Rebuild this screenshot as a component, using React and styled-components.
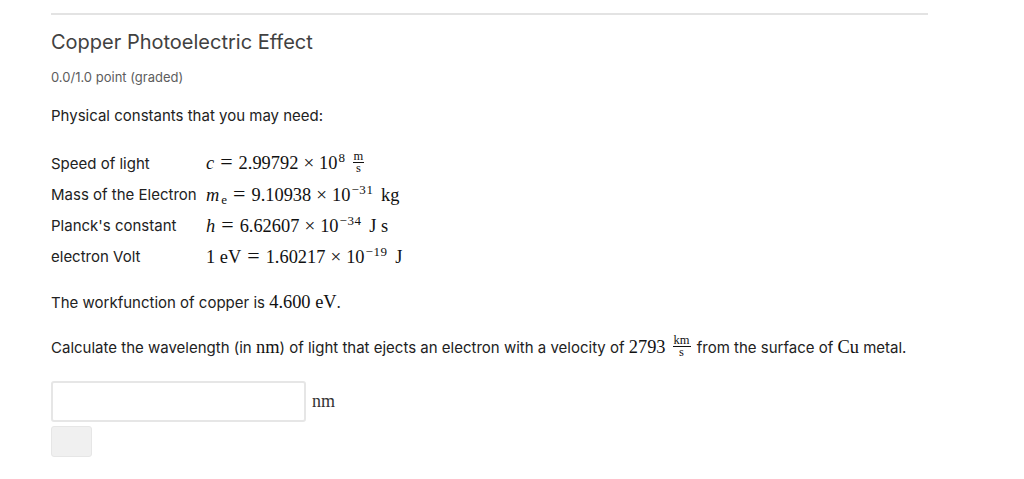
import React from "react";
import styled, { createGlobalStyle } from "styled-components";

const GlobalStyle = createGlobalStyle`
  html, body {
    margin: 0;
    padding: 0;
    background: #fff;
  }
  body {
    font-family: Inter, "Open Sans", sans-serif;
    color: #313131;
  }
`;

const Page = styled.div`
  padding: 0 96px 0 51px;
`;

const Rule = styled.hr`
  margin: 13px 0 0;
  border: 0;
  border-top: 2px solid #e3e3e3;
`;

const Title = styled.h3`
  margin: 15px 0 0;
  font-size: 20px;
  font-weight: 400;
  line-height: 24px;
  color: #414141;
`;

const Points = styled.div`
  margin-top: 15px;
  font-size: 13px;
  line-height: 16px;
  color: #5d5d5d;
`;

const Para = styled.p`
  margin: ${(p) => p.$top}px 0 0;
  font-size: 15px;
  line-height: 20px;
  color: #222;
`;

const Table = styled.div`
  margin-top: 22px;
  display: grid;
  grid-template-columns: 155px auto;
  grid-auto-rows: 31px;
  align-items: center;
  justify-content: start;
`;

const Label = styled.div`
  font-size: 15px;
  color: #222;
`;

const Math = styled.span`
  font-family: "Liberation Serif", "DejaVu Serif", serif;
  font-size: 18.4px;
  color: #111;
  white-space: nowrap;
`;

const Op = styled.span`
  display: inline-block;
  margin: 0 ${(p) => (p.$rel ? 6 : 5)}px;
  font-size: ${(p) => (p.$rel ? 22 : 19)}px;
  line-height: 1;
`;

const Frac = styled.span`
  display: inline-flex;
  flex-direction: column;
  align-items: center;
  vertical-align: middle;
  font-size: 12.5px;
  line-height: 11px;
  margin: 0 2px 0 7px;
  position: relative;
  top: -2px;

  & > span:first-child {
    border-bottom: 1px solid #111;
    padding: 0 1px;
  }
`;

const Sup = styled.sup`
  font-size: 13px;
  line-height: 0;
  margin: 0 ${(p) => (p.$unit ? 3 : 0)}px 0 1px;
  letter-spacing: 0.6px;
`;

const Sub = styled.sub`
  font-size: 13px;
  line-height: 0;
  vertical-align: -3px;
  margin-left: 2px;
`;

const AnswerRow = styled.div`
  margin-top: 21px;
  display: flex;
  align-items: center;
  gap: 6px;
`;

const Input = styled.input`
  width: 255px;
  height: 41px;
  box-sizing: border-box;
  border: 2px solid #e6e6e6;
  border-radius: 3px;
  background: #fff;
`;

const Unit = styled(Math)`
  font-size: 18px;
  color: #333;
`;

const SubmitButton = styled.button`
  display: block;
  margin-top: 4px;
  width: 41px;
  height: 31px;
  border: 1px solid #e6e6e6;
  border-radius: 3px;
  background: #f0f0f0;
`;

const Eq = () => <Op $rel>=</Op>;
const Times = () => <Op>×</Op>;

const constants = [
  [
    "Speed of light",
    <>
      <i>c</i>
      <Eq />
      2.99792
      <Times />
      10<Sup>8</Sup>
      <Frac>
        <span>m</span>
        <span>s</span>
      </Frac>
    </>,
  ],
  [
    "Mass of the Electron",
    <>
      <i>m</i>
      <Sub>e</Sub>
      <Eq />
      9.10938
      <Times />
      10<Sup $unit>−31</Sup> kg
    </>,
  ],
  [
    "Planck's constant",
    <>
      <i>h</i>
      <Eq />
      6.62607
      <Times />
      10<Sup $unit>−34</Sup> J s
    </>,
  ],
  [
    "electron Volt",
    <>
      1 eV
      <Eq />
      1.60217
      <Times />
      10<Sup $unit>−19</Sup> J
    </>,
  ],
];

export default function App() {
  return (
    <>
      <GlobalStyle />
      <Page>
        <Rule />
        <Title>Copper Photoelectric Effect</Title>
        <Points>0.0/1.0 point (graded)</Points>
        <Para $top={21}>Physical constants that you may need:</Para>
        <Table>
          {constants.map(([label, value]) => (
            <React.Fragment key={label}>
              <Label>{label}</Label>
              <Math>{value}</Math>
            </React.Fragment>
          ))}
        </Table>
        <Para $top={20}>
          The workfunction of copper is <Math>4.600 eV</Math>.
        </Para>
        <Para $top={24}>
          Calculate the wavelength (in <Math>nm</Math>) of light that ejects an
          electron with a velocity of <Math>2793</Math>
          <Math>
            <Frac>
              <span>km</span>
              <span>s</span>
            </Frac>
          </Math>{" "}
          from the surface of <Math>Cu</Math> metal.
        </Para>
        <AnswerRow>
          <Input type="text" />
          <Unit>nm</Unit>
        </AnswerRow>
        <SubmitButton type="button" />
      </Page>
    </>
  );
}
